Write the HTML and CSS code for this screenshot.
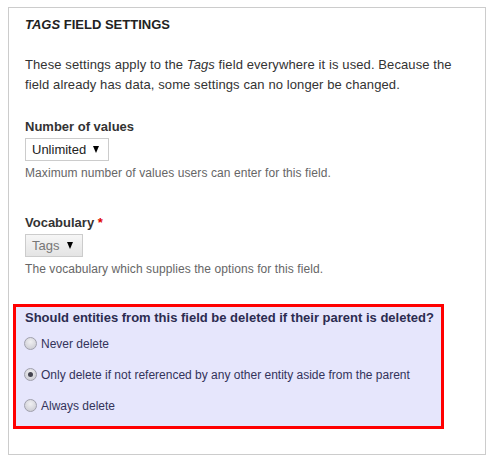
FILE: index.html
```html
<!DOCTYPE html>
<html lang="en">
<head>
<meta charset="utf-8">
<title>Tags field settings</title>
<link rel="stylesheet" href="styles.css">
</head>
<body>
<div class="fieldset">
  <h2 class="legend"><em>Tags</em> field settings</h2>
  <p class="intro">These settings apply to the <em>Tags</em> field everywhere it is used. Because the field already has data, some settings can no longer be changed.</p>

  <div class="form-item">
    <label class="label">Number of values</label>
    <div class="select select-cardinality"><span class="select-text">Unlimited</span><svg class="arrow" width="6" height="7" viewBox="0 0 6 7"><polygon points="0,0 6,0 3,7" fill="#000"/></svg></div>
    <div class="description">Maximum number of values users can enter for this field.</div>
  </div>

  <div class="form-item form-item-vocab">
    <label class="label">Vocabulary <span class="required">*</span></label>
    <div class="select select-disabled"><span class="select-text">Tags</span><svg class="arrow" width="6" height="7" viewBox="0 0 6 7"><polygon points="0,0 6,0 3,7" fill="#000"/></svg></div>
    <div class="description">The vocabulary which supplies the options for this field.</div>
  </div>

  <div class="highlight">
    <div class="question">Should entities from this field be deleted if their parent is deleted?</div>
    <div class="radio-row"><span class="radio"></span><span class="radio-label">Never delete</span></div>
    <div class="radio-row"><span class="radio radio-checked"></span><span class="radio-label">Only delete if not referenced by any other entity aside from the parent</span></div>
    <div class="radio-row"><span class="radio"></span><span class="radio-label">Always delete</span></div>
  </div>
</div>
</body>
</html>
```

FILE: styles.css
```css
html, body {
  margin: 0;
  padding: 0;
  background: #ffffff;
}

body {
  font-family: "Liberation Sans", Arial, sans-serif;
  font-size: 13px;
  line-height: 20px;
  color: #333333;
}

.fieldset {
  box-sizing: border-box;
  width: 478px;
  margin: 7px 0 0 8px;
  border: 1px solid #cccccc;
  padding: 7px 16px 25px 16px;
}

.legend {
  margin: 0;
  font-size: 13px;
  line-height: 20px;
  font-weight: bold;
  text-transform: uppercase;
  color: #222222;
}

.intro {
  margin: 20px 0 0 0;
  line-height: 20px;
  letter-spacing: 0.1px;
}

.form-item {
  margin-top: 22px;
}

.form-item-vocab {
  margin-top: 32px;
}

.label {
  display: block;
  font-weight: bold;
  line-height: 20px;
  color: #333333;
}

.required {
  color: #e00000;
}

.select {
  box-sizing: border-box;
  margin-top: 1px;
  height: 23px;
  border: 1px solid #cccccc;
  background: #ffffff;
  display: flex;
  align-items: center;
  justify-content: space-between;
  padding: 0 9px 0 6px;
  line-height: 21px;
  color: #222222;
}

.select-cardinality {
  width: 84px;
}

.select-disabled {
  width: 58px;
  color: #777777;
  background: linear-gradient(#f6f6f6, #e4e4e4);
}

.arrow {
  display: block;
  margin-top: -1px;
}

.description {
  margin-top: 4px;
  font-size: 12px;
  line-height: 16px;
  color: #666666;
  letter-spacing: 0.08px;
}

.highlight {
  margin: 27px 0 0 -12px;
  width: 431px;
  box-sizing: border-box;
  border: 3px solid #ff0000;
  background: #e6e6fc;
  padding: 3px 4px 5px 8px;
  color: #2f2f55;
}

.question {
  font-weight: bold;
  line-height: 16px;
  padding-left: 1px;
  white-space: nowrap;
  color: #2c2c50;
}

.question + .radio-row {
  margin-top: 2px;
}

.radio-row {
  display: flex;
  align-items: center;
  height: 31px;
}

.radio {
  box-sizing: border-box;
  width: 13px;
  height: 13px;
  border-radius: 50%;
  border: 1px solid #a0a0ac;
  background: radial-gradient(circle at 50% 35%, #f0f0f2, #c6c6ce);
  margin-right: 4px;
  margin-top: -1px;
  position: relative;
  flex: none;
}

.radio-checked::after {
  content: "";
  position: absolute;
  left: 3px;
  top: 3px;
  width: 5px;
  height: 5px;
  border-radius: 50%;
  background: #444450;
}

.radio-label {
  font-size: 12px;
  line-height: 20px;
  white-space: nowrap;
  color: #33335a;
}
```
